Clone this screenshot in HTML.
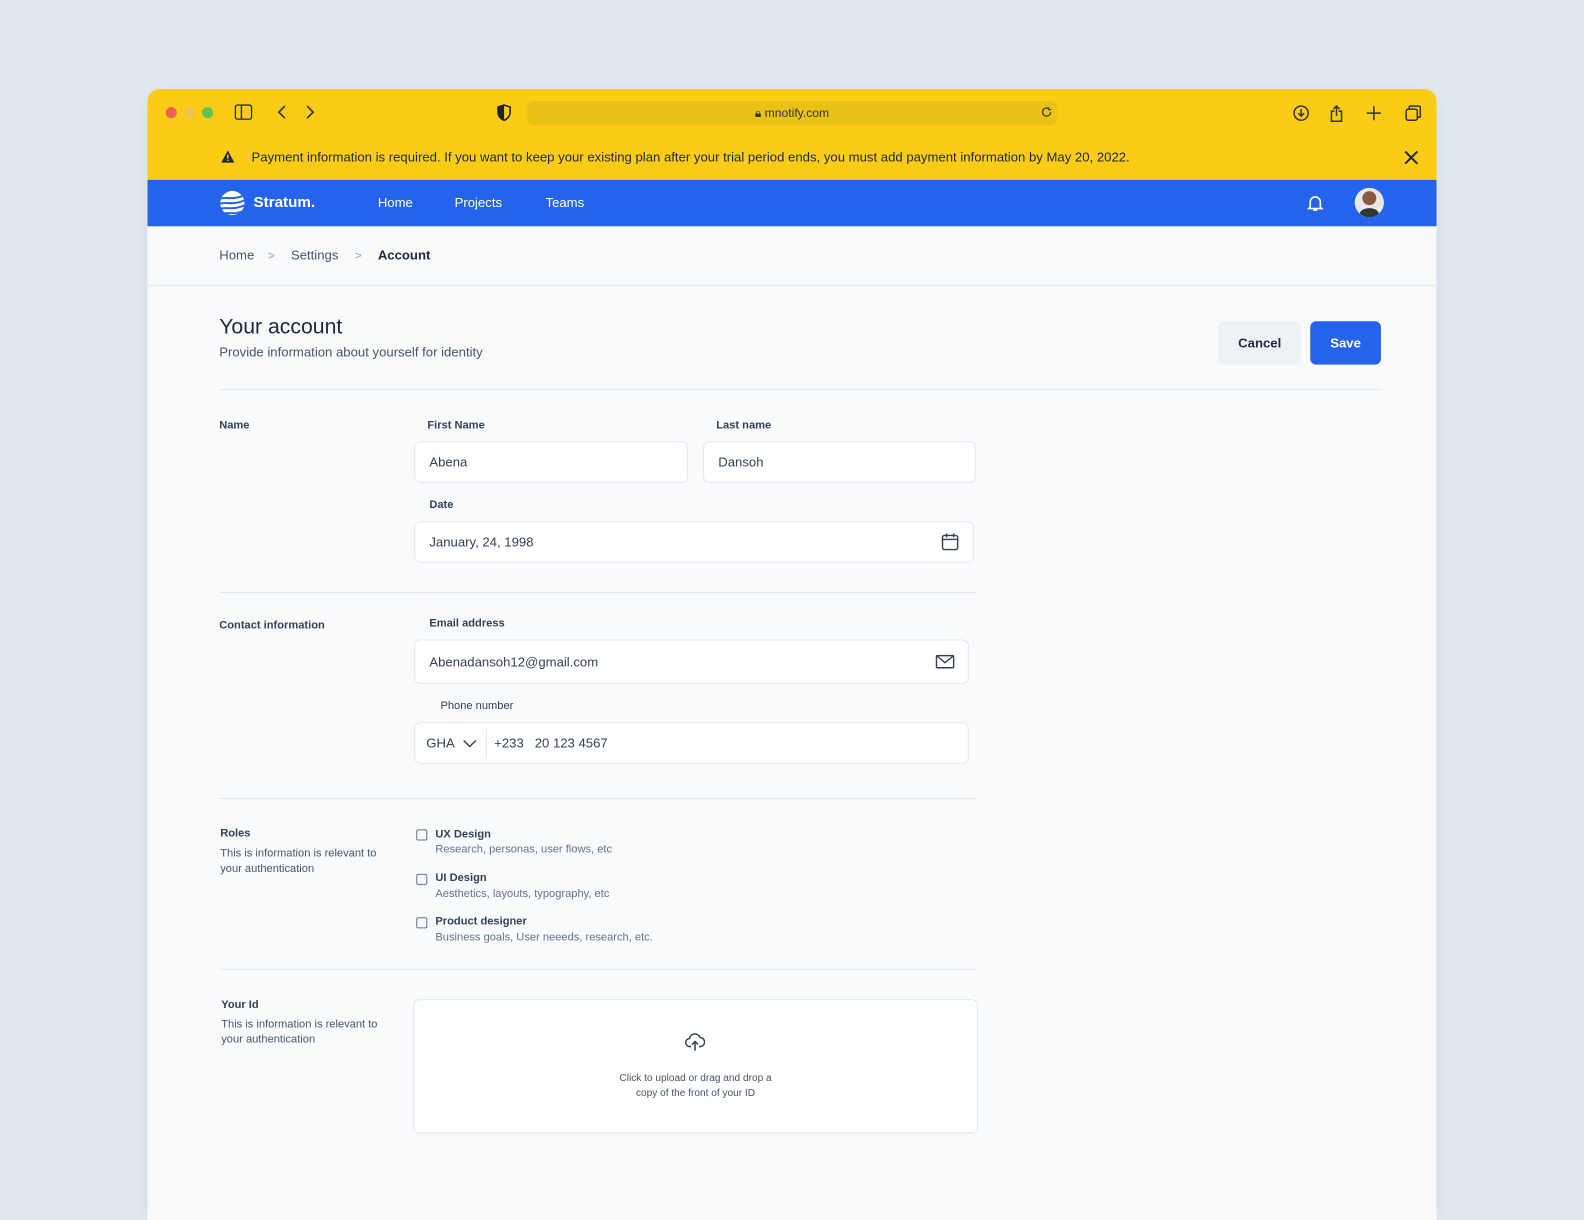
<!DOCTYPE html>
<html><head><meta charset="utf-8"><style>
*{box-sizing:border-box;margin:0;padding:0}
body{width:1584px;height:1188px;background:#e2e8f0;font-family:"Liberation Sans",sans-serif;position:relative;overflow:hidden;color:#1e293b}
.wrap{position:absolute;left:0;top:0;width:1568px;height:1176px;transform:scale(1.0102);transform-origin:0 0}
.win{position:absolute;left:146px;top:88px;width:1276px;height:1120px;background:#f8fafc;border-radius:12px 12px 0 0;overflow:hidden;box-shadow:0 4px 20px rgba(0,0,0,.05)}
.a{position:absolute}
.yel{left:0;top:0;width:1276px;height:90px;background:#facc15}
.nav{left:0;top:90px;width:1276px;height:46px;background:#2563eb}
.inp{position:absolute;background:#fff;border:1px solid #e2e8f0;border-radius:6px;font-size:13px;color:#334155;padding-left:14px;display:flex;align-items:center}
.lbl{position:absolute;font-size:11px;font-weight:bold;color:#334155}
.hr{position:absolute;height:1px;background:#e2e8f0}
.cb{position:absolute;width:11px;height:11px;border:1.3px solid #64748b;border-radius:2px}
.t1{position:absolute;font-size:11px;font-weight:bold;color:#334155}
.t2{position:absolute;font-size:11px;color:#64748b}
</style></head><body>
<div class="wrap">
<div class="win">
<div class="a yel"></div>
<div class="a" style="left:18px;top:18px;width:11px;height:11px;border-radius:50%;background:#ef5f57"></div>
<div class="a" style="left:36px;top:18px;width:11px;height:11px;border-radius:50%;background:#f0c14f"></div>
<div class="a" style="left:54px;top:18px;width:11px;height:11px;border-radius:50%;background:#5fc553"></div>
<svg class="a" style="left:86px;top:15px" width="18" height="16" viewBox="0 0 18 16" fill="none" stroke="#333" stroke-width="1.4"><rect x="1" y="1" width="16" height="14" rx="2"/><line x1="7" y1="1" x2="7" y2="15"/></svg>
<svg class="a" style="left:126px;top:15px" width="40" height="16" fill="none" stroke="#333" stroke-width="1.6"><path d="M10 2L4 8l6 6M32 2l6 6-6 6"/></svg>
<svg class="a" style="left:346px;top:15px" width="14" height="17" viewBox="0 0 14 17"><path d="M7 1L1 3v5c0 4 3 7 6 8 3-1 6-4 6-8V3z" fill="none" stroke="#222" stroke-width="1.6"/><path d="M7 1v15c-3-1-6-4-6-8V3z" fill="#222"/></svg>
<div class="a" style="left:376px;top:12px;width:524px;height:24px;background:#eac216;border-radius:6px;font-size:12px;color:#333;text-align:center;line-height:24px">🔒︎ mnotify.com</div>
<svg class="a" style="left:884px;top:17px" width="12" height="12" fill="none" stroke="#444" stroke-width="1.3"><path d="M10 6a4 4 0 1 1-2-3.5M8 1v2.5h2.5"/></svg>
<svg class="a" style="left:1134px;top:15px" width="130" height="18" fill="none" stroke="#333" stroke-width="1.5"><circle cx="8" cy="9" r="7"/><path d="M8 5v7M5 9l3 3 3-3"/><path d="M41 7h-3v10h10V7h-3M43 2v10M40 5l3-3 3 3"/><path d="M80 2v14M73 9h14"/><rect x="112" y="5" width="11" height="11" rx="2"/><path d="M115 5V3a1 1 0 0 1 1-1h9a1 1 0 0 1 1 1v9a1 1 0 0 1-1 1h-2"/></svg>
<svg class="a" style="left:72px;top:60px" width="15" height="14"><path d="M7.5 1L14 13H1z" fill="#1e293b"/><rect x="6.8" y="5" width="1.4" height="4" fill="#facc15"/><rect x="6.8" y="10" width="1.4" height="1.4" fill="#facc15"/></svg>
<div class="a" style="left:103px;top:60px;font-size:13px;color:#1e293b">Payment information is required. If you want to keep your existing plan after your trial period ends, you must add payment information by May 20, 2022.</div>
<svg class="a" style="left:1244px;top:61px" width="14" height="14" stroke="#1e293b" stroke-width="2"><path d="M1 1l12 12M13 1L1 13"/></svg>
<div class="a nav"></div>
<svg class="a" style="left:71px;top:100px" width="26" height="26" viewBox="0 0 26 26"><circle cx="13" cy="13" r="12" fill="#fff"/><g stroke="#2563eb" stroke-width="2" fill="none"><path d="M0 9c6-3 12 2 26-4M0 14c6-3 12 2 26-4M0 19c6-3 12 2 26-4M2 24c6-3 12 2 24-4"/></g></svg>
<div class="a" style="left:105px;top:104px;color:#fff;font-size:15px;font-weight:bold">Stratum.</div>
<div class="a" style="left:228px;top:105px;color:#fff;font-size:13px">Home</div>
<div class="a" style="left:304px;top:105px;color:#fff;font-size:13px">Projects</div>
<div class="a" style="left:394px;top:105px;color:#fff;font-size:13px">Teams</div>
<svg class="a" style="left:1148px;top:104px" width="16" height="18" fill="none" stroke="#fff" stroke-width="1.6"><path d="M3 13V8a5 5 0 0 1 10 0v5l1.5 1.5h-13zM6 16h4"/></svg>
<div class="a" style="left:1195px;top:98px;width:29px;height:29px;border-radius:50%;background:radial-gradient(circle at 50% 35%,#8a5a3c 0 28%,#e8e8e8 30%);overflow:hidden"><div style="position:absolute;left:5px;top:20px;width:19px;height:12px;border-radius:50%;background:#2f3a33"></div></div>
<div class="a" style="left:71px;top:157px;font-size:13px;color:#475569">Home</div>
<div class="a" style="left:119px;top:158px;font-size:12px;color:#94a3b8">&gt;</div>
<div class="a" style="left:142px;top:157px;font-size:13px;color:#475569">Settings</div>
<div class="a" style="left:205px;top:158px;font-size:12px;color:#94a3b8">&gt;</div>
<div class="a" style="left:228px;top:157px;font-size:13px;color:#1e293b;font-weight:bold">Account</div>
<div class="hr" style="left:0;top:194px;width:1276px"></div>
<div class="a" style="left:71px;top:224px;font-size:21px;color:#1e293b">Your account</div>
<div class="a" style="left:71px;top:253px;font-size:13px;color:#475569">Provide information about yourself for identity</div>
<div class="a" style="left:1060px;top:230px;width:82px;height:43px;border-radius:6px;background:#eef2f6;font-size:13px;font-weight:bold;color:#1e293b;text-align:center;line-height:43px">Cancel</div>
<div class="a" style="left:1151px;top:230px;width:70px;height:43px;border-radius:6px;background:#2563eb;font-size:13px;font-weight:bold;color:#fff;text-align:center;line-height:43px">Save</div>
<div class="hr" style="left:71px;top:297px;width:1151px"></div>
<div class="lbl" style="left:71px;top:327px">Name</div>
<div class="lbl" style="left:277px;top:327px">First Name</div>
<div class="lbl" style="left:563px;top:327px">Last name</div>
<div class="inp" style="left:264px;top:349px;width:271px;height:41px">Abena</div>
<div class="inp" style="left:550px;top:349px;width:270px;height:41px">Dansoh</div>
<div class="lbl" style="left:279px;top:406px">Date</div>
<div class="inp" style="left:264px;top:428px;width:554px;height:41px">January, 24, 1998</div>
<svg class="a" style="left:786px;top:439px" width="17" height="18" fill="none" stroke="#334155" stroke-width="1.4"><rect x="1" y="3" width="15" height="14" rx="2"/><path d="M1 7h15M5 1v4M12 1v4"/></svg>
<div class="hr" style="left:71px;top:498px;width:750px"></div>
<div class="lbl" style="left:71px;top:525px">Contact information</div>
<div class="lbl" style="left:279px;top:523px">Email address</div>
<div class="inp" style="left:264px;top:545px;width:549px;height:44px">Abenadansoh12@gmail.com</div>
<svg class="a" style="left:780px;top:560px" width="19" height="14" fill="none" stroke="#334155" stroke-width="1.4"><rect x="1" y="1" width="17" height="12" rx="1"/><path d="M1 1l8.5 7L18 1"/></svg>
<div class="a" style="left:290px;top:605px;font-size:11px;color:#334155">Phone number</div>
<div class="inp" style="left:264px;top:627px;width:549px;height:41px;padding-left:11px">GHA
<svg style="margin-left:8px" width="14" height="8" fill="none" stroke="#334155" stroke-width="1.4"><path d="M1 1l6 6 6-6"/></svg>
<span style="width:1px;height:30px;background:#e2e8f0;margin:0 7px 0 9px"></span>+233&nbsp;&nbsp;&nbsp;20 123 4567</div>
<div class="hr" style="left:71px;top:702px;width:750px"></div>
<div class="lbl" style="left:72px;top:731px">Roles</div>
<div class="t2" style="left:72px;top:750px;color:#475569;line-height:15px;width:170px">This is information is relevant to your authentication</div>
<div class="cb" style="left:266px;top:733px"></div><div class="t1" style="left:285px;top:732px">UX Design</div><div class="t2" style="left:285px;top:747px">Research, personas, user flows, etc</div>
<div class="cb" style="left:266px;top:777px"></div><div class="t1" style="left:285px;top:775px">UI Design</div><div class="t2" style="left:285px;top:791px">Aesthetics, layouts, typography, etc</div>
<div class="cb" style="left:266px;top:820px"></div><div class="t1" style="left:285px;top:818px">Product designer</div><div class="t2" style="left:285px;top:834px">Business goals, User neeeds, research, etc.</div>
<div class="hr" style="left:71px;top:871px;width:750px"></div>
<div class="lbl" style="left:73px;top:901px">Your Id</div>
<div class="t2" style="left:73px;top:919px;color:#475569;line-height:15px;width:170px">This is information is relevant to your authentication</div>
<div class="a" style="left:263px;top:901px;width:559px;height:133px;background:#fff;border:1px solid #e2e8f0;border-radius:6px"></div>
<svg class="a" style="left:532px;top:934px" width="20" height="19" fill="none" stroke="#334155" stroke-width="1.5"><path d="M6 14H5a4 4 0 0 1-.5-8A5.5 5.5 0 0 1 15 5a3.5 3.5 0 0 1 0 9h-1M10 18V9M7 12l3-3 3 3"/></svg>
<div class="a" style="left:263px;top:972px;width:559px;text-align:center;font-size:10px;color:#475569;line-height:15px">Click to upload or drag and drop a<br>copy of the front of your ID</div>
</div>
</div>
</body></html>
